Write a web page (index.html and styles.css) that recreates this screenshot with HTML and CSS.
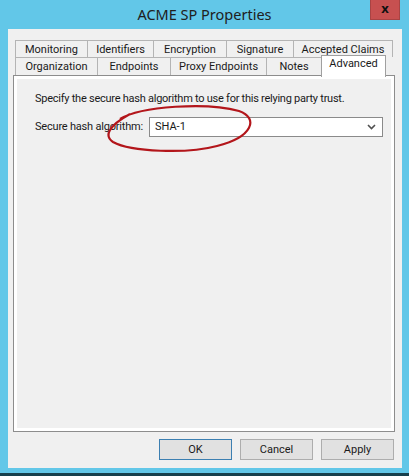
FILE: index.html
```html
<!DOCTYPE html>
<html>
<head>
<meta charset="utf-8">
<link rel="stylesheet" href="styles.css">
</head>
<body>
<div class="frame">
  <div class="titlebar">
    <div class="title">ACME SP Properties</div>
    <div class="close">x</div>
  </div>
  <div class="dialog">
    <div class="tabs">
      <div class="tabrow row1">
        <div class="tab w-mon">Monitoring</div>
        <div class="tab w-ide">Identifiers</div>
        <div class="tab w-enc">Encryption</div>
        <div class="tab w-sig">Signature</div>
        <div class="tab w-acc">Accepted Claims</div>
      </div>
      <div class="tabrow row2">
        <div class="tab w-org">Organization</div>
        <div class="tab w-end">Endpoints</div>
        <div class="tab w-pro">Proxy Endpoints</div>
        <div class="tab w-not">Notes</div>
        <div class="tab selected w-adv">Advanced</div>
      </div>
    </div>
    <div class="panel">
      <div class="page">
        <div class="intro">Specify the secure hash algorithm to use for this relying party trust.</div>
        <div class="field">
          <span class="label">Secure hash algorithm:</span>
          <div class="combo">
            <span class="value">SHA-1</span>
            <svg class="chev" width="9" height="6" viewBox="0 0 9 6"><path d="M1 1 L4.5 4.5 L8 1" fill="none" stroke="#505050" stroke-width="1.6"/></svg>
          </div>
          <svg class="ring" width="152" height="52" viewBox="0 0 152 52"><path d="M 15 16 C 36 3, 102 -1, 134 8 C 154 15, 148 34, 112 43 C 82 51, 26 49, 8 39 C -1 33, 3 23, 25 11" fill="none" stroke="#b3161b" stroke-width="2.2"/></svg>
        </div>
      </div>
    </div>
    <div class="buttons">
      <div class="btn default">OK</div>
      <div class="btn">Cancel</div>
      <div class="btn">Apply</div>
    </div>
  </div>
</div>
</body>
</html>
```

FILE: styles.css
```css
html, body {
  margin: 0;
  padding: 0;
}
body {
  width: 409px;
  height: 476px;
  overflow: hidden;
  background: #17404d;
  font-family: Roboto, "Noto Sans", sans-serif;
  font-size: 11px;
  color: #1a1a1a;
}
.frame {
  height: 473px;
  background: #62c7e8;
  box-sizing: border-box;
}
.titlebar {
  height: 29px;
  display: grid;
  grid-template-columns: 1fr auto 1fr;
  align-items: start;
}
.title {
  grid-column: 2;
  font-family: "Noto Sans", sans-serif;
  font-size: 14.5px;
  line-height: 29px;
  color: #202020;
}
.close {
  grid-column: 3;
  justify-self: end;
  margin-right: 9px;
  width: 30px;
  height: 20px;
  box-sizing: border-box;
  background: #c75050;
  border: 1px solid #a94343;
  border-top: none;
  color: #111;
  font-family: "Noto Sans", sans-serif;
  font-weight: bold;
  font-size: 13px;
  line-height: 17px;
  text-align: center;
}
.dialog {
  margin: 0 7px 0 8px;
  height: 439px;
  background: #f0f0f0;
  padding: 11px 7px 0 5px;
  box-sizing: border-box;
  display: flex;
  flex-direction: column;
}
.tabs {
  margin-left: 2px;
  display: flex;
  flex-direction: column;
  position: relative;
  z-index: 2;
}
.tabrow {
  display: flex;
}
.tab {
  box-sizing: border-box;
  border: 1px solid #b4b4b4;
  border-bottom: none;
  margin-right: -1px;
  text-align: center;
  background: #f0f0f0;
  color: #1a1a1a;
  white-space: nowrap;
}
.row1 .tab {
  height: 17px;
  line-height: 17px;
}
.row1 .w-acc { margin-right: 0; }
.row2 {
  height: 18px;
  align-items: flex-end;
}
.row2 .tab {
  height: 18px;
  line-height: 17px;
}
.row2 .tab.selected {
  height: 22px;
  margin-bottom: -1px;
  background: #ffffff;
  border-color: #a0a0a0;
  line-height: 15px;
  align-self: flex-start;
  margin-top: -2px;
  padding-bottom: 4px;
}
.w-mon { width: 73px; }
.w-ide { width: 67px; }
.w-enc { width: 74px; }
.w-sig { width: 68px; }
.w-acc { width: 100px; }
.w-org { width: 83px; }
.w-end { width: 74px; }
.w-pro { width: 97px; }
.w-not { width: 56px; }
.w-adv { width: 65px; }
.panel {
  height: 357px;
  box-sizing: border-box;
  border: 1px solid #8d8d8d;
  background: #ffffff;
  padding: 3px;
  position: relative;
  z-index: 1;
}
.page {
  height: 100%;
  background: #f0f0f0;
  padding: 12px 8px 0 18px;
  box-sizing: border-box;
}
.intro {
  line-height: 15px;
  height: 15px;
  letter-spacing: -0.25px;
}
.field {
  margin-top: 11px;
  display: flex;
  align-items: center;
  gap: 6px;
  position: relative;
}
.label {
  line-height: 20px;
  letter-spacing: -0.2px;
}
.combo {
  flex: 1;
  height: 20px;
  box-sizing: border-box;
  border: 1px solid #8a8a8a;
  background: #ffffff;
  display: flex;
  align-items: center;
  justify-content: space-between;
  padding: 0 6px 0 5px;
}
.value {
  line-height: 18px;
}
.chev {
  display: block;
}
.ring {
  position: absolute;
  left: 70px;
  top: -14px;
  pointer-events: none;
}
.buttons {
  margin-top: 7px;
  display: flex;
  justify-content: flex-end;
  gap: 8px;
  padding-right: 1px;
}
.btn {
  width: 73px;
  height: 21px;
  box-sizing: border-box;
  border: 1px solid #adadad;
  background: #e1e1e1;
  text-align: center;
  line-height: 19px;
  color: #1a1a1a;
}
.btn.default {
  border-color: #3c7fb1;
}
```
